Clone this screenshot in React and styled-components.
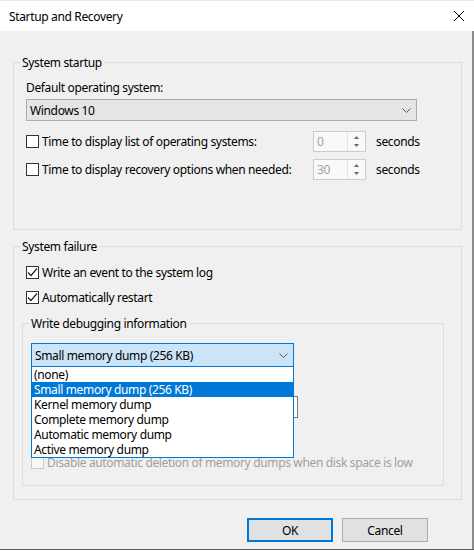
import React from "react";
import styled, { createGlobalStyle } from "styled-components";

const GlobalStyle = createGlobalStyle`
  html, body {
    margin: 0;
    padding: 0;
    background: #ffffff;
  }
  body {
    font-family: "Noto Sans", "Open Sans", sans-serif;
    font-size: 12px;
    letter-spacing: -0.35px;
    color: #000;
  }
  * {
    box-sizing: border-box;
  }
`;

const Window = styled.div`
  width: 474px;
  height: 554px;
  background: #f0f0f0;
  display: flex;
  flex-direction: column;
  border-bottom: 4px solid #ffffff;
  box-shadow: inset 0 -1px 0 #5a5a5a, inset -2px 0 0 #8a8a8a;
`;

const TitleBar = styled.div`
  height: 31px;
  flex: none;
  background: #ffffff;
  border-top: 1px solid #e8e8e8;
  display: flex;
  align-items: center;
  justify-content: space-between;
  padding: 0 10px 0 9px;
`;

const Body = styled.div`
  flex: 1;
  display: flex;
  flex-direction: column;
  padding: 24px 12px 0 13px;
`;

const Group = styled.fieldset`
  margin: ${(p) => p.$mt || 0}px ${(p) => p.$mr || 0}px 0 0;
  border: 1px solid #dcdcdc;
  padding: ${(p) => p.$pt}px 8px ${(p) => p.$pb}px 8px;
  min-width: 0;
`;

const Legend = styled.legend`
  margin-left: -2px;
  padding: 0 2px;
  line-height: 15px;
`;

const Indent = styled.div`
  padding-left: 4px;
  display: flex;
  flex-direction: column;
`;

const Label = styled.div`
  line-height: 15px;
  white-space: nowrap;
`;

const Select = styled.div`
  width: ${(p) => p.$w}px;
  height: ${(p) => p.$h}px;
  margin-top: ${(p) => p.$mt || 0}px;
  background: ${(p) => (p.$open ? "#cce4f7" : "#e5e5e5")};
  border: 1px solid ${(p) => (p.$open ? "#0078d7" : "#adadad")};
  display: flex;
  align-items: center;
  justify-content: space-between;
  padding: 0 5px 0 3px;
`;

const SelectWrap = styled.div`
  position: relative;
  width: fit-content;
`;

const DropList = styled.ul`
  position: absolute;
  top: 23px;
  left: 0;
  width: 100%;
  margin: 0;
  padding: 0;
  list-style: none;
  background: #ffffff;
  border: 1px solid #0078d7;
  z-index: 5;
`;

const DropItem = styled.li`
  height: 15px;
  line-height: 15px;
  padding-left: 2px;
  background: ${(p) => (p.$active ? "#0078d7" : "transparent")};
  color: ${(p) => (p.$active ? "#ffffff" : "#000")};
  white-space: nowrap;
`;

const TimeRow = styled.div`
  display: grid;
  grid-template-columns: 277px 53px auto;
  column-gap: 10px;
  align-items: center;
  margin-top: ${(p) => p.$mt}px;
`;

const Check = styled.label`
  display: flex;
  align-items: center;
  gap: 3px;
  line-height: 15px;
  white-space: nowrap;
  margin-top: ${(p) => p.$mt || 0}px;
  color: ${(p) => (p.$disabled ? "#a0a0a0" : "#000")};
`;

const Box = styled.span`
  width: 13px;
  height: 13px;
  flex: none;
  border: 1px solid ${(p) => (p.$disabled ? "#cccccc" : "#333333")};
  background: ${(p) => (p.$disabled ? "#f7f7f7" : "#ffffff")};
  display: flex;
  align-items: center;
  justify-content: center;
`;

const Spinner = styled.div`
  height: 21px;
  border: 1px solid #cccccc;
  background: #f9f9f9;
  display: flex;
`;

const SpinValue = styled.div`
  flex: 1;
  color: #a0a0a0;
  padding-left: 3px;
  display: flex;
  align-items: center;
`;

const SpinButtons = styled.div`
  width: 18px;
  border-left: 1px solid #e3e3e3;
  display: flex;
  flex-direction: column;
  align-items: center;
  justify-content: space-evenly;
`;

const TextBox = styled.div`
  width: ${(p) => p.$w}px;
  height: 22px;
  margin-top: ${(p) => p.$mt || 0}px;
  border: 1px solid #7a7a7a;
  background: #ffffff;
`;

const ButtonRow = styled.div`
  display: flex;
  justify-content: flex-end;
  gap: 9px;
  margin-top: 18px;
  padding-right: 34px;
`;

const Button = styled.button`
  width: 86px;
  height: 24px;
  font: inherit;
  letter-spacing: inherit;
  color: #000;
  background: #e1e1e1;
  border: ${(p) => (p.$primary ? "2px solid #0078d7" : "1px solid #adadad")};
  padding: 0;
`;

const Chevron = () => (
  <svg width="9" height="5" viewBox="0 0 9 5">
    <path d="M0.5 0.5 L4.5 4.5 L8.5 0.5" fill="none" stroke="#555" strokeWidth="1" />
  </svg>
);

const Tick = () => (
  <svg width="11" height="11" viewBox="0 0 11 11">
    <path d="M1 5.5 L4 8.5 L10 1.5" fill="none" stroke="#222" strokeWidth="1.2" />
  </svg>
);

const CloseIcon = () => (
  <svg width="10" height="10" viewBox="0 0 10 10">
    <path d="M0 0 L10 10 M10 0 L0 10" stroke="#000" strokeWidth="1" />
  </svg>
);

const Arrow = ({ up }) => (
  <svg width="5" height="3" viewBox="0 0 5 3">
    <path d={up ? "M0 3 L2.5 0 L5 3 Z" : "M0 0 L2.5 3 L5 0 Z"} fill="#6a6a6a" />
  </svg>
);

const CheckBox = ({ checked, disabled, children, mt }) => (
  <Check $mt={mt} $disabled={disabled}>
    <Box $disabled={disabled}>{checked && <Tick />}</Box>
    {children}
  </Check>
);

const SpinBox = ({ value }) => (
  <Spinner>
    <SpinValue>{value}</SpinValue>
    <SpinButtons>
      <Arrow up />
      <Arrow />
    </SpinButtons>
  </Spinner>
);

const dumpOptions = [
  "(none)",
  "Small memory dump (256 KB)",
  "Kernel memory dump",
  "Complete memory dump",
  "Automatic memory dump",
  "Active memory dump",
];

export default function App() {
  return (
    <>
      <GlobalStyle />
      <Window>
        <TitleBar>
          <span>Startup and Recovery</span>
          <CloseIcon />
        </TitleBar>
        <Body>
          <Group $pt={10} $pb={49}>
            <Legend>System startup</Legend>
            <Indent>
              <Label>Default operating system:</Label>
              <Select $w={391} $h={22} $mt={4}>
                <span>Windows 10</span>
                <Chevron />
              </Select>
              <TimeRow $mt={10}>
                <CheckBox>Time to display list of operating systems:</CheckBox>
                <SpinBox value="0" />
                <span>seconds</span>
              </TimeRow>
              <TimeRow $mt={7}>
                <CheckBox>Time to display recovery options when needed:</CheckBox>
                <SpinBox value="30" />
                <span>seconds</span>
              </TimeRow>
            </Indent>
          </Group>

          <Group $mt={9} $pt={11} $pb={13}>
            <Legend>System failure</Legend>
            <Indent>
              <CheckBox checked>Write an event to the system log</CheckBox>
              <CheckBox checked mt={10}>Automatically restart</CheckBox>
            </Indent>
            <Group $mt={11} $mr={9} $pt={12} $pb={15}>
              <Legend>Write debugging information</Legend>
              <SelectWrap>
                <Select $w={263} $h={24} $open>
                  <span>Small memory dump (256 KB)</span>
                  <Chevron />
                </Select>
                <DropList>
                  {dumpOptions.map((opt, i) => (
                    <DropItem key={opt} $active={i === 1}>
                      {opt}
                    </DropItem>
                  ))}
                </DropList>
              </SelectWrap>
              <TextBox $w={267} $mt={29} />
              <CheckBox disabled mt={37}>
                Disable automatic deletion of memory dumps when disk space is low
              </CheckBox>
            </Group>
          </Group>

          <ButtonRow>
            <Button $primary>OK</Button>
            <Button>Cancel</Button>
          </ButtonRow>
        </Body>
      </Window>
    </>
  );
}
